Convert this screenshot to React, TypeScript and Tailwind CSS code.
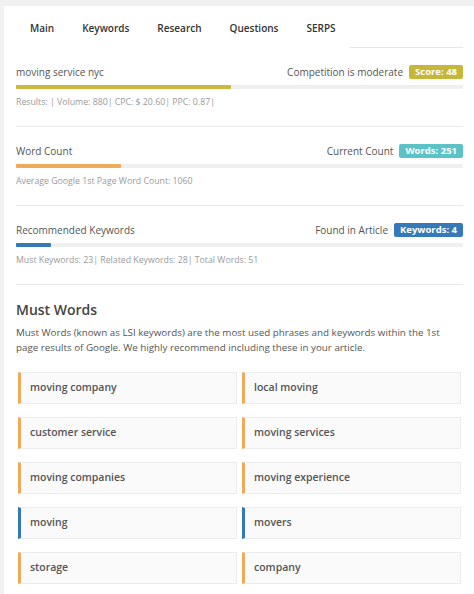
import React from "react"

const tabs = ["Main", "Keywords", "Research", "Questions", "SERPS"]

const words: { text: string; color: "orange" | "blue" }[] = [
  { text: "moving company", color: "orange" },
  { text: "local moving", color: "orange" },
  { text: "customer service", color: "orange" },
  { text: "moving services", color: "orange" },
  { text: "moving companies", color: "orange" },
  { text: "moving experience", color: "orange" },
  { text: "moving", color: "blue" },
  { text: "movers", color: "blue" },
  { text: "storage", color: "orange" },
  { text: "company", color: "orange" },
]

function Metric({
  title,
  label,
  badge,
  badgeClass,
  barClass,
  fill,
  stats,
}: {
  title: string
  label: string
  badge: string
  badgeClass: string
  barClass: string
  fill: number
  stats: string
}) {
  return (
    <div className="pt-[16px] pb-[18px] border-b border-[#e9e9e9]">
      <div className="flex items-center justify-between h-[16px]">
        <span className="text-[10px] text-[#555]">{title}</span>
        <div className="flex items-center gap-[6px]">
          <span className="text-[10px] text-[#555]">{label}</span>
          <span className={`h-[14px] px-[6px] rounded-[2px] flex items-center text-[9.5px] font-bold text-white ${badgeClass}`}>
            {badge}
          </span>
        </div>
      </div>
      <div className="mt-[5px] h-[4px] bg-[#efefef] rounded-[1px]">
        <div className={`h-full rounded-[1px] ${barClass}`} style={{ width: `${fill}%` }} />
      </div>
      <div className="mt-[7px] text-[8.75px] leading-[12px] text-[#9a9a9a]">{stats}</div>
    </div>
  )
}

export default function App() {
  return (
    <div className="bg-[#f1f1f1] pt-[6px] pl-[4px] h-[594px] overflow-hidden font-['Open_Sans',sans-serif]">
      <div className="bg-white h-full pl-[12px] pr-[11px]">
        <div className="flex">
          {tabs.map((t) => (
            <div
              key={t}
              className="px-[14px] pt-[15px] pb-[12px] text-[10px] leading-[15px] font-semibold text-[#333]"
            >
              {t}
            </div>
          ))}
          <div className="flex-1 border-b border-[#e6e6e6]" />
        </div>

        <Metric
          title="moving service nyc"
          label="Competition is moderate"
          badge="Score: 48"
          badgeClass="bg-[#c6b63a]"
          barClass="bg-[#c9b93c]"
          fill={48}
          stats="Results: | Volume: 880| CPC: $ 20.60| PPC: 0.87|"
        />
        <Metric
          title="Word Count"
          label="Current Count"
          badge="Words: 251"
          badgeClass="bg-[#5bc3c7]"
          barClass="bg-[#efab5b]"
          fill={23.6}
          stats="Average Google 1st Page Word Count: 1060"
        />
        <Metric
          title="Recommended Keywords"
          label="Found in Article"
          badge="Keywords: 4"
          badgeClass="bg-[#3579b8]"
          barClass="bg-[#3579b8]"
          fill={7.8}
          stats="Must Keywords: 23| Related Keywords: 28| Total Words: 51"
        />

        <h2 className="mt-[15px] text-[14px] leading-[20px] font-semibold text-[#444]">Must Words</h2>
        <p className="mt-[5px] text-[9.8px] leading-[15px] text-[#555]">
          Must Words (known as LSI keywords) are the most used phrases and keywords within the 1st page
          results of Google. We highly recommend including these in your article.
        </p>

        <div className="mt-[17px] ml-[2px] mr-[2px] grid grid-cols-2 gap-x-[5px] gap-y-[13px]">
          {words.map((w) => (
            <div
              key={w.text}
              className={`h-[32px] flex items-center pl-[9px] bg-[#fafafa] border border-[#ececec] border-l-[3px] text-[10.5px] font-semibold text-[#555] ${
                w.color === "orange" ? "border-l-[#efab5b]" : "border-l-[#3579b8]"
              }`}
            >
              {w.text}
            </div>
          ))}
        </div>
      </div>
    </div>
  )
}
